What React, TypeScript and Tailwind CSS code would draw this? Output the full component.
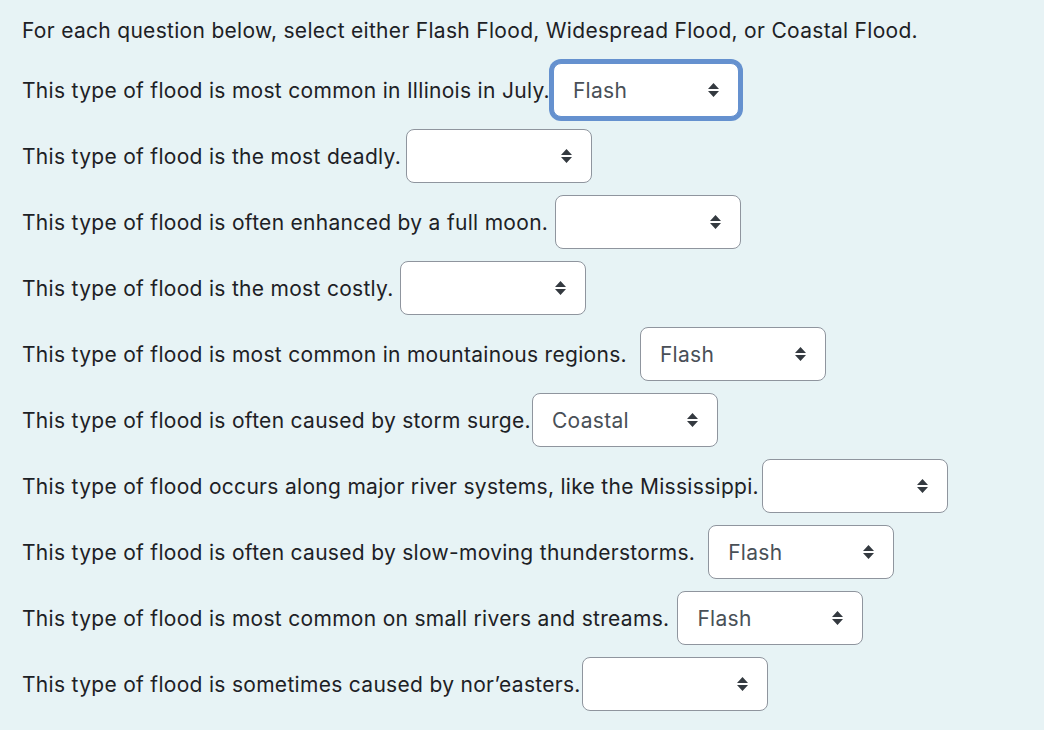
import React from 'react';

type Row = { label: string; value: string; gap: number; focused?: boolean };

const rows: Row[] = [
  { label: 'This type of flood is most common in Illinois in July.', value: 'Flash', gap: 3, focused: true },
  { label: 'This type of flood is the most deadly.', value: '', gap: 5 },
  { label: 'This type of flood is often enhanced by a full moon.', value: '', gap: 7 },
  { label: 'This type of flood is the most costly.', value: '', gap: 6 },
  { label: 'This type of flood is most common in mountainous regions.', value: 'Flash', gap: 13 },
  { label: 'This type of flood is often caused by storm surge.', value: 'Coastal', gap: 1 },
  { label: 'This type of flood occurs along major river systems, like the Mississippi.', value: '', gap: 3 },
  { label: 'This type of flood is often caused by slow-moving thunderstorms.', value: 'Flash', gap: 13 },
  { label: 'This type of flood is most common on small rivers and streams.', value: 'Flash', gap: 8 },
  { label: 'This type of flood is sometimes caused by nor’easters.', value: '', gap: 1 },
];

const Arrows = () => (
  <svg width="11" height="14" viewBox="0 0 11 14" className="shrink-0">
    <path d="M5.5 0L11 6H0z M5.5 14L0 8h11z" fill="#343a40" />
  </svg>
);

const FakeSelect = ({ value, focused }: { value: string; focused?: boolean }) => (
  <div
    className={`flex h-[54px] w-[186px] shrink-0 items-center justify-between rounded-[8px] border bg-white pl-[19px] pr-[19px] text-[#495057] ${
      focused ? 'border-[#6591cf] shadow-[0_0_0_4px_#6591cf]' : 'border-[#8f959e]'
    }`}
  >
    <span className="pt-[2px]">{value}</span>
    <Arrows />
  </div>
);

export default function App() {
  return (
    <div
      className="min-h-screen bg-[#e7f3f5] pl-[22px] pt-[16px] text-[21px] leading-[30px] tracking-[0.3px] text-[#1d2125]"
      style={{ fontFamily: 'Inter, "Noto Sans", sans-serif' }}
    >
      <p className="mb-[17px]">For each question below, select either Flash Flood, Widespread Flood, or Coastal Flood.</p>
      <div className="flex flex-col gap-[12px]">
        {rows.map((r, i) => (
          <div key={i} className="flex h-[54px] items-center">
            <span className="whitespace-nowrap pt-[2px]">{r.label}</span>
            <div style={{ width: r.gap }} />
            <FakeSelect value={r.value} focused={r.focused} />
          </div>
        ))}
      </div>
    </div>
  );
}
